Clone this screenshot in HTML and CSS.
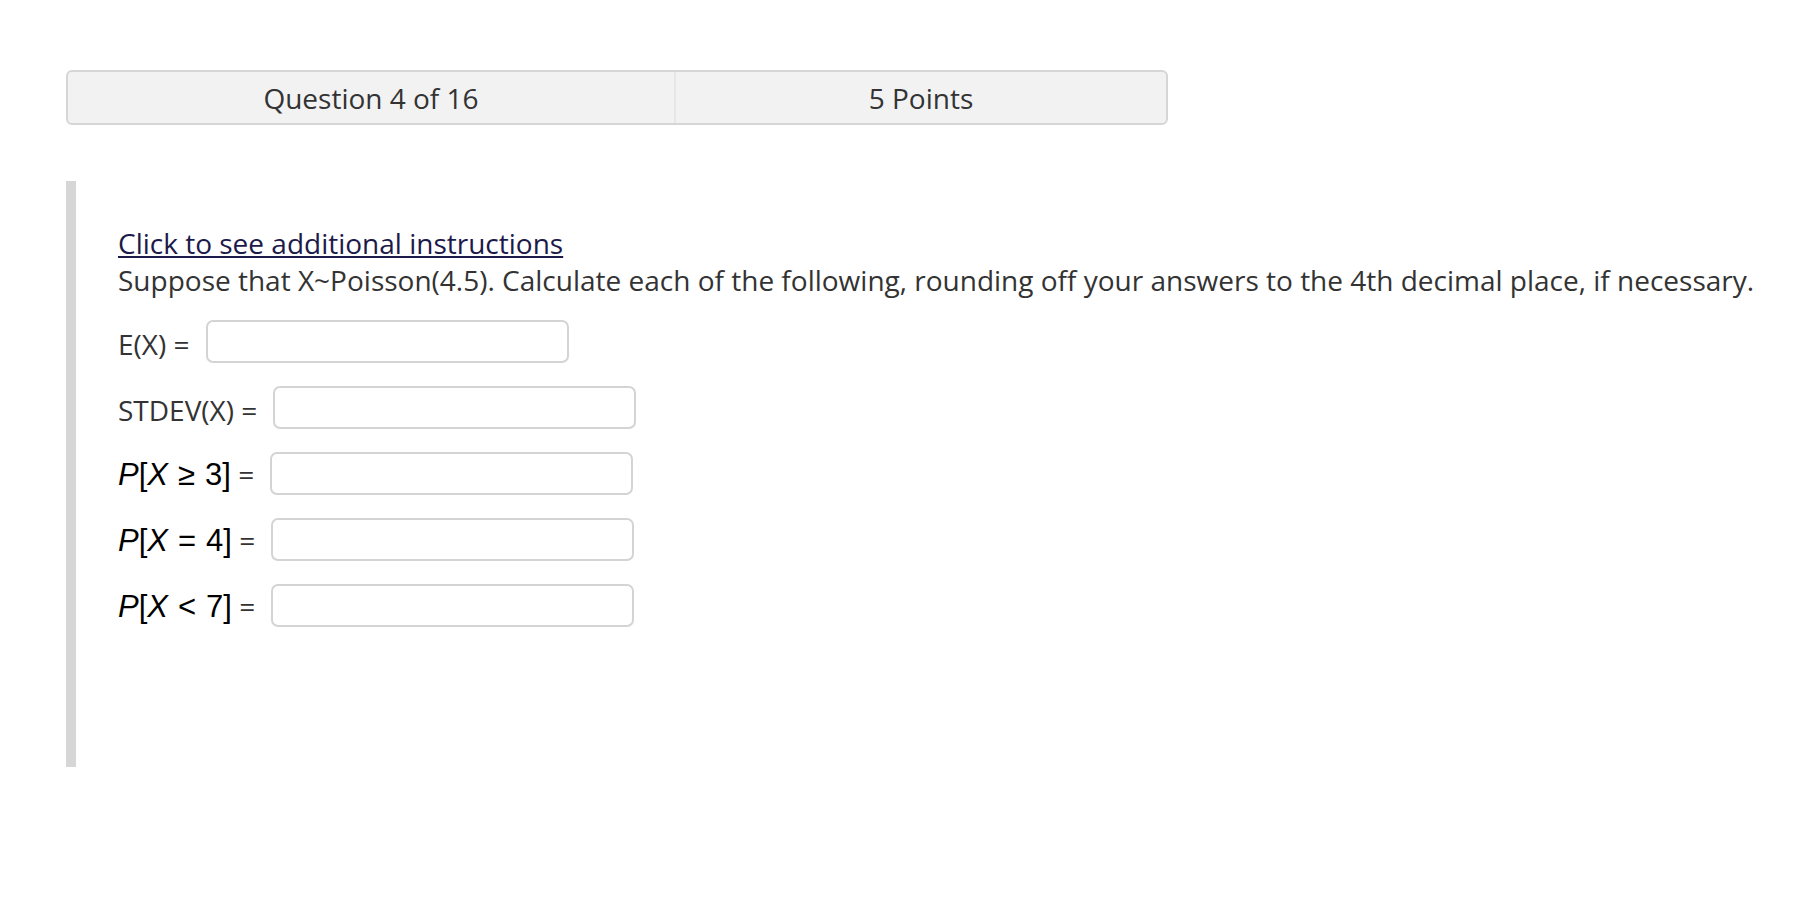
FILE: index.html
```html
<!doctype html>
<html>
<head>
    <title>Question 4 of 16</title>
    <meta charset="utf-8" />
    <link rel="stylesheet" href="styles.css">
</head>
<body>
<div class="page">
    <div class="qhead">
        <div class="qcell">Question 4 of 16</div>
        <div class="qcell">5 Points</div>
    </div>

    <div class="question">
        <a class="more" href="#">Click to see additional instructions</a>
        <p class="stem">Suppose that X~Poisson(4.5). Calculate each of the following, rounding off your answers to the 4th decimal place, if necessary.</p>

        <div class="answers">
            <div class="row">
                <span class="lbl">E(X) =</span>
                <input class="box" type="text">
            </div>
            <div class="row">
                <span class="lbl">STDEV(X) =</span>
                <input class="box" type="text">
            </div>
            <div class="row">
                <span class="lbl lbl-math"><span class="math"><i>P</i>[<i>X</i><span class="rel">&ge;</span>3]</span> =</span>
                <input class="box" type="text">
            </div>
            <div class="row">
                <span class="lbl lbl-math"><span class="math"><i>P</i>[<i>X</i><span class="rel">=</span>4]</span> =</span>
                <input class="box" type="text">
            </div>
            <div class="row">
                <span class="lbl lbl-math"><span class="math"><i>P</i>[<i>X</i><span class="rel">&lt;</span>7]</span> =</span>
                <input class="box" type="text">
            </div>
        </div>
    </div>
</div>
</body>
</html>
```

FILE: styles.css
```css
body        { margin:0; background:#fff; color:#333; font-family:"Open Sans", "Liberation Sans", sans-serif; font-size:28px; }
.page       { padding:70px 0 0 66px; }

/* question header */
.qhead      { width:1102px; height:55px; box-sizing:border-box; display:grid; grid-template-columns:606px 1fr;
              background:#f2f2f3; border:2px solid #d6d6d8; border-radius:6px; }
.qcell      { display:flex; align-items:center; justify-content:center; }
.qcell + .qcell { border-left:2px solid #e7e7e9; }

/* question body */
.question   { margin-top:56px; height:586px; box-sizing:border-box; border-left:10px solid #d6d6d6; padding:43px 0 0 42px; }
.more       { color:#1c1a4a; line-height:36px; }
.stem       { margin:0; line-height:36px; }

.answers    { margin-top:22px; display:flex; flex-direction:column; gap:23px; }
.row        { display:flex; align-items:center; gap:16px; }
.lbl        { line-height:36px; padding-top:4px; white-space:nowrap; }
.lbl-math   { padding-top:0; }
.box        { width:363px; height:43px; box-sizing:border-box; border:2px solid #d4d4d4; border-radius:7px; background:#fff; }

/* math labels */
.math       { font-family:"Liberation Sans", Arial, sans-serif; font-size:31px; color:#000; line-height:34px; }
.math i     { font-style:italic; }
.rel        { margin:0 10px; }
```
